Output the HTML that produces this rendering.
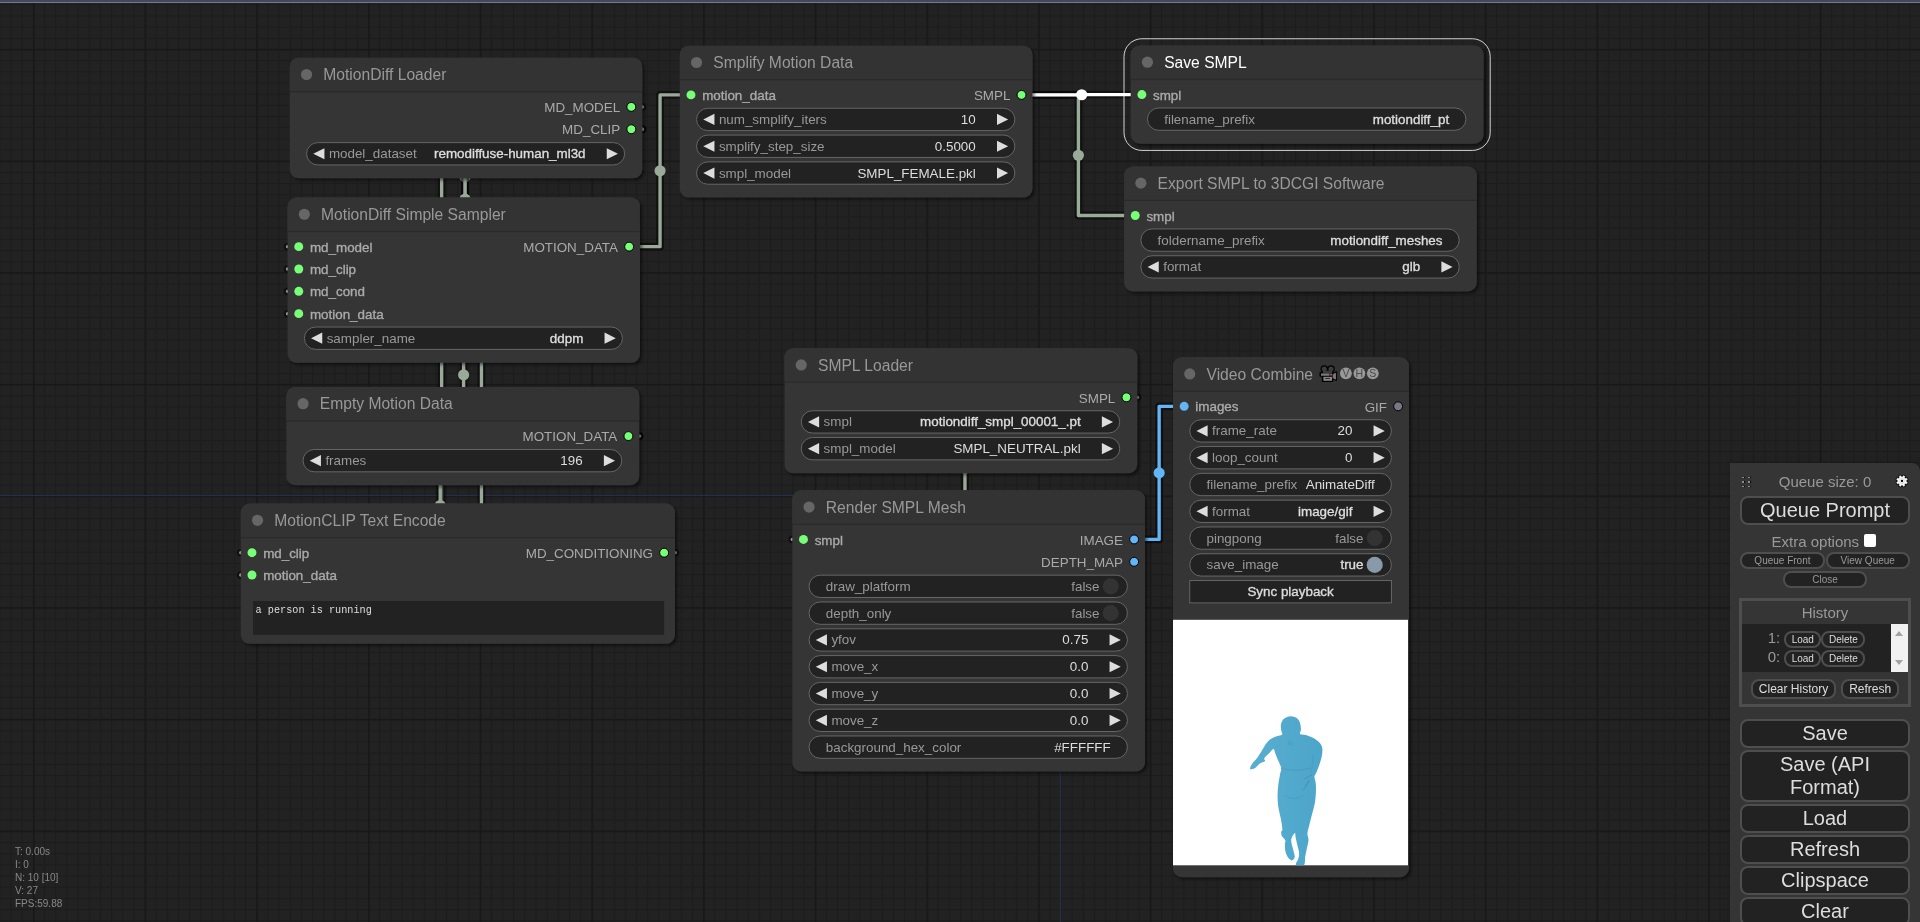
<!DOCTYPE html>
<html lang="en">
<head>
<meta charset="utf-8">
<title>ComfyUI</title>
<style>
html,body{margin:0;padding:0;width:1920px;height:922px;overflow:hidden;background:#202020;font-family:"Liberation Sans",Arial,sans-serif;}
#graph{position:absolute;left:0;top:0;width:1920px;height:922px;display:block;will-change:transform;}
#graph text{font-family:"Liberation Sans",Arial,sans-serif;}
#topbar{position:absolute;left:0;top:0;width:1920px;height:3px;background:#45475f;border-bottom:1px solid #74778f;box-sizing:border-box;z-index:5;}
.comfy-menu{font-size:15px;position:absolute;top:463px;left:1730px;text-align:center;display:flex;flex-direction:column;align-items:center;z-index:999;width:170px;color:#999;background-color:#353535;font-family:"Liberation Sans",Arial,sans-serif;padding:10px;border-radius:0 8px 8px 8px;box-shadow:3px 3px 8px rgba(0,0,0,0.4);line-height:17px;will-change:transform;}
.comfy-menu button{font-family:"Liberation Sans",Arial,sans-serif;font-size:20px;line-height:23px;box-sizing:border-box;display:block;color:#ddd;background-color:#222;border-radius:8px;border:2px solid #4e4e4e;margin:2px 0 0 0;padding:1px 6px;}
.comfy-menu>button{width:170px;}
.comfy-menu>*{flex-shrink:0;}
.hdr{position:relative;width:170px;height:21px;}
.hdr .qs{position:absolute;left:0;right:0;top:0;line-height:17px;}
.dh{position:absolute;left:0px;top:1.6px;width:12px;height:14px;}
.dh i{position:absolute;width:2px;height:1.4px;background:#8d8d8d;box-shadow:1px 0 1px #000;}
.xo{height:17px;padding-top:8.3px;line-height:17px;}
.cb{display:inline-block;width:12.4px;height:12.4px;background:#fff;border-radius:2px;vertical-align:0.6px;margin-left:5px;position:relative;left:0px}
.xo label{position:relative;left:-1px}
.comfy-menu-btns{position:relative;height:37.9px;margin-bottom:10px;width:170px;}
.comfy-menu .comfy-menu-btns button{position:absolute;margin:0;font-size:10px;line-height:10.5px;height:16.5px;width:84.3px;color:#999;padding:1.8px 2px 0 2px;}
.comfy-list{position:relative;width:166px;color:#999;background-color:#353535;margin-bottom:10px;border:3px solid #4e4e4e;}
.comfy-list h4{margin:0;padding:3px;font-weight:normal;font-size:15px;line-height:17px;}
.comfy-list-items{height:38px;background-color:#222;padding:5px 22px 5px 5px;position:relative;}
.comfy-list-items div.r{height:19px;line-height:17px;white-space:nowrap;display:flex;justify-content:center;align-items:flex-start;}
.comfy-list-items div.r span{margin-right:4px;}
.comfy-menu .comfy-list-items button{font-size:10px;line-height:10.5px;height:16.5px;margin-top:2.2px;padding:2.1px 5.5px 0 5.5px;}
.comfy-list-actions{margin:5px;display:flex;gap:5px;justify-content:center;}
.comfy-menu .comfy-list-actions button{font-size:12px;line-height:14px;height:20px;padding:1px 6px;}
.sb{position:absolute;right:0;top:0;width:17px;height:48px;background:#f1f1f1;}
.sb i{position:absolute;left:4px;width:0;height:0;border-left:4.5px solid transparent;border-right:4.5px solid transparent;}
.sb i.u{top:7px;border-bottom:5px solid #a3a3a3;}
.sb i.d{bottom:7px;border-top:5px solid #a3a3a3;}
</style>
</head>
<body>
<svg id="graph" width="1920" height="922" viewBox="0 0 1920 922">
<defs>
<pattern id="gs" x="-525.7" y="-397.83" width="11.17" height="11.17" patternUnits="userSpaceOnUse">
<rect width="11.17" height="11.17" fill="#222222"/>
<rect x="0" y="0" width="11.17" height="1.2" fill="#1c1c1c"/>
<rect x="0" y="0" width="1.2" height="11.17" fill="#1c1c1c"/>
</pattern>
<pattern id="gl" x="-525.25" y="-397.88" width="111.67" height="111.67" patternUnits="userSpaceOnUse">
<rect x="0" y="0" width="111.67" height="1.6" fill="#181818"/>
<rect x="0" y="0" width="1.6" height="111.67" fill="#181818"/>
</pattern>
<filter id="sh" x="-5%" y="-5%" width="110%" height="115%">
<feDropShadow dx="2.23" dy="2.23" stdDeviation="1.68" flood-color="#000000" flood-opacity="0.5"/>
</filter>
<linearGradient id="fig" x1="0" y1="0" x2="1" y2="0">
<stop offset="0" stop-color="#58aed0"/><stop offset="1" stop-color="#4ca5ca"/>
</linearGradient>
</defs>
<rect width="1920" height="922" fill="url(#gs)"/>
<rect width="1920" height="922" fill="url(#gl)"/>
<path d="M-5 495.6 H1060.4 V930" fill="none" stroke="#223355" stroke-width="1"/>
<g>
<path d="M631.33 106.88 L642.5 106.88 L465.05 106.88 L465.05 246.63 L287.6 246.63 L298.77 246.63" fill="none" stroke="rgba(0,0,0,0.5)" stroke-width="7.82" stroke-linejoin="round"/>
<path d="M631.33 106.88 L642.5 106.88 L465.05 106.88 L465.05 246.63 L287.6 246.63 L298.77 246.63" fill="none" stroke="#99AA99" stroke-width="3.35" stroke-linejoin="round"/>
<circle cx="465.05" cy="176.76" r="5.58" fill="#99AA99"/>
<path d="M631.33 129.22 L642.5 129.22 L465.05 129.22 L465.05 268.97 L287.6 268.97 L298.77 268.97" fill="none" stroke="rgba(0,0,0,0.5)" stroke-width="7.82" stroke-linejoin="round"/>
<path d="M631.33 129.22 L642.5 129.22 L465.05 129.22 L465.05 268.97 L287.6 268.97 L298.77 268.97" fill="none" stroke="#99AA99" stroke-width="3.35" stroke-linejoin="round"/>
<circle cx="465.05" cy="199.09" r="5.58" fill="#99AA99"/>
<path d="M631.33 129.22 L642.5 129.22 L441.65 129.22 L441.65 552.68 L240.8 552.68 L251.97 552.68" fill="none" stroke="rgba(0,0,0,0.5)" stroke-width="7.82" stroke-linejoin="round"/>
<path d="M631.33 129.22 L642.5 129.22 L441.65 129.22 L441.65 552.68 L240.8 552.68 L251.97 552.68" fill="none" stroke="#99AA99" stroke-width="3.35" stroke-linejoin="round"/>
<circle cx="441.65" cy="340.95" r="5.58" fill="#99AA99"/>
<path d="M664.13 552.68 L675.3 552.68 L481.45 552.68 L481.45 291.3 L287.6 291.3 L298.77 291.3" fill="none" stroke="rgba(0,0,0,0.5)" stroke-width="7.82" stroke-linejoin="round"/>
<path d="M664.13 552.68 L675.3 552.68 L481.45 552.68 L481.45 291.3 L287.6 291.3 L298.77 291.3" fill="none" stroke="#99AA99" stroke-width="3.35" stroke-linejoin="round"/>
<circle cx="481.45" cy="421.99" r="5.58" fill="#99AA99"/>
<path d="M628.43 436.08 L639.6 436.08 L463.6 436.08 L463.6 313.64 L287.6 313.64 L298.77 313.64" fill="none" stroke="rgba(0,0,0,0.5)" stroke-width="7.82" stroke-linejoin="round"/>
<path d="M628.43 436.08 L639.6 436.08 L463.6 436.08 L463.6 313.64 L287.6 313.64 L298.77 313.64" fill="none" stroke="#99AA99" stroke-width="3.35" stroke-linejoin="round"/>
<circle cx="463.6" cy="374.86" r="5.58" fill="#99AA99"/>
<path d="M628.43 436.08 L639.6 436.08 L440.2 436.08 L440.2 575.02 L240.8 575.02 L251.97 575.02" fill="none" stroke="rgba(0,0,0,0.5)" stroke-width="7.82" stroke-linejoin="round"/>
<path d="M628.43 436.08 L639.6 436.08 L440.2 436.08 L440.2 575.02 L240.8 575.02 L251.97 575.02" fill="none" stroke="#99AA99" stroke-width="3.35" stroke-linejoin="round"/>
<circle cx="440.2" cy="505.55" r="5.58" fill="#99AA99"/>
<path d="M629.13 246.63 L640.3 246.63 L660.05 246.63 L660.05 94.88 L679.8 94.88 L690.97 94.88" fill="none" stroke="rgba(0,0,0,0.5)" stroke-width="7.82" stroke-linejoin="round"/>
<path d="M629.13 246.63 L640.3 246.63 L660.05 246.63 L660.05 94.88 L679.8 94.88 L690.97 94.88" fill="none" stroke="#99AA99" stroke-width="3.35" stroke-linejoin="round"/>
<circle cx="660.05" cy="170.76" r="5.58" fill="#99AA99"/>
<path d="M1021.53 94.88 L1032.7 94.88 L1078.4 94.88 L1078.4 215.53 L1124.1 215.53 L1135.27 215.53" fill="none" stroke="rgba(0,0,0,0.5)" stroke-width="7.82" stroke-linejoin="round"/>
<path d="M1021.53 94.88 L1032.7 94.88 L1078.4 94.88 L1078.4 215.53 L1124.1 215.53 L1135.27 215.53" fill="none" stroke="#99AA99" stroke-width="3.35" stroke-linejoin="round"/>
<circle cx="1078.4" cy="155.21" r="5.58" fill="#99AA99"/>
<path d="M1126.43 397.33 L1137.6 397.33 L964.95 397.33 L964.95 539.43 L792.3 539.43 L803.47 539.43" fill="none" stroke="rgba(0,0,0,0.5)" stroke-width="7.82" stroke-linejoin="round"/>
<path d="M1126.43 397.33 L1137.6 397.33 L964.95 397.33 L964.95 539.43 L792.3 539.43 L803.47 539.43" fill="none" stroke="#99AA99" stroke-width="3.35" stroke-linejoin="round"/>
<circle cx="964.95" cy="468.38" r="5.58" fill="#99AA99"/>
<path d="M1134.13 539.43 L1145.3 539.43 L1159.15 539.43 L1159.15 406.33 L1173 406.33 L1184.17 406.33" fill="none" stroke="rgba(0,0,0,0.5)" stroke-width="7.82" stroke-linejoin="round"/>
<path d="M1134.13 539.43 L1145.3 539.43 L1159.15 539.43 L1159.15 406.33 L1173 406.33 L1184.17 406.33" fill="none" stroke="#64B5F6" stroke-width="3.35" stroke-linejoin="round"/>
<circle cx="1159.15" cy="472.88" r="5.58" fill="#64B5F6"/>
<path d="M1021.53 94.88 L1032.7 94.88 L1081.7 94.88 L1081.7 94.58 L1130.7 94.58 L1141.87 94.58" fill="none" stroke="rgba(0,0,0,0.5)" stroke-width="7.82" stroke-linejoin="round"/>
<path d="M1021.53 94.88 L1032.7 94.88 L1081.7 94.88 L1081.7 94.58 L1130.7 94.58 L1141.87 94.58" fill="none" stroke="#FFFFFF" stroke-width="3.35" stroke-linejoin="round"/>
<circle cx="1081.7" cy="94.73" r="5.58" fill="#FFFFFF"/>
</g>
<g>
<rect x="289.8" y="57.75" width="352.4" height="120.6" rx="8.93" fill="#353535" filter="url(#sh)"/>
<path d="M298.73 57.75 h334.53 a8.93 8.93 0 0 1 8.93 8.93 v24.57 h-352.4 v-24.57 a8.93 8.93 0 0 1 8.93 -8.93 z" fill="#333333"/>
<rect x="289.8" y="91.15" width="352.4" height="1.25" fill="rgba(0,0,0,0.2)"/>
<circle cx="306.55" cy="74.5" r="5.58" fill="#666666"/>
<text x="323.3" y="80.08" font-size="15.63" fill="#999999">MotionDiff Loader</text>
<circle cx="631.33" cy="106.88" r="4.47" fill="#77FF77" stroke="#000000" stroke-width="1"/>
<text x="620.17" y="112.07" font-size="13.4" fill="#AAAAAA" text-anchor="end">MD_MODEL</text>
<circle cx="631.33" cy="129.22" r="4.47" fill="#77FF77" stroke="#000000" stroke-width="1"/>
<text x="620.17" y="134.4" font-size="13.4" fill="#AAAAAA" text-anchor="end">MD_CLIP</text>
<rect x="306.55" y="142.62" width="318.1" height="22.33" rx="11.17" fill="#222222" stroke="#666666" stroke-width="1"/>
<path d="M324.42 148.2 L313.25 153.79 L324.42 159.37 Z" fill="#DDDDDD"/>
<path d="M606.78 148.2 L617.95 153.79 L606.78 159.37 Z" fill="#DDDDDD"/>
<text x="328.88" y="158.25" font-size="13.4" fill="#999999">model_dataset</text>
<text x="585.57" y="158.25" font-size="13.4" fill="#DDDDDD" text-anchor="end" stroke="#DDDDDD" stroke-width="0.35">remodiffuse-human_ml3d</text>
</g>
<g>
<rect x="287.6" y="197.5" width="352.4" height="165.27" rx="8.93" fill="#353535" filter="url(#sh)"/>
<path d="M296.53 197.5 h334.53 a8.93 8.93 0 0 1 8.93 8.93 v24.57 h-352.4 v-24.57 a8.93 8.93 0 0 1 8.93 -8.93 z" fill="#333333"/>
<rect x="287.6" y="230.9" width="352.4" height="1.25" fill="rgba(0,0,0,0.2)"/>
<circle cx="304.35" cy="214.25" r="5.58" fill="#666666"/>
<text x="321.1" y="219.83" font-size="15.63" fill="#999999">MotionDiff Simple Sampler</text>
<circle cx="298.77" cy="246.63" r="4.47" fill="#77FF77"/>
<text x="309.93" y="251.77" font-size="13.4" fill="#AAAAAA" stroke="#AAAAAA" stroke-width="0.35">md_model</text>
<circle cx="298.77" cy="268.97" r="4.47" fill="#77FF77"/>
<text x="309.93" y="274.1" font-size="13.4" fill="#AAAAAA" stroke="#AAAAAA" stroke-width="0.35">md_clip</text>
<circle cx="298.77" cy="291.3" r="4.47" fill="#77FF77"/>
<text x="309.93" y="296.44" font-size="13.4" fill="#AAAAAA" stroke="#AAAAAA" stroke-width="0.35">md_cond</text>
<circle cx="298.77" cy="313.64" r="4.47" fill="#77FF77"/>
<text x="309.93" y="318.77" font-size="13.4" fill="#AAAAAA" stroke="#AAAAAA" stroke-width="0.35">motion_data</text>
<circle cx="629.13" cy="246.63" r="4.47" fill="#77FF77" stroke="#000000" stroke-width="1"/>
<text x="617.97" y="251.82" font-size="13.4" fill="#AAAAAA" text-anchor="end">MOTION_DATA</text>
<rect x="304.35" y="327.04" width="318.1" height="22.33" rx="11.17" fill="#222222" stroke="#666666" stroke-width="1"/>
<path d="M322.22 332.62 L311.05 338.2 L322.22 343.79 Z" fill="#DDDDDD"/>
<path d="M604.58 332.62 L615.75 338.2 L604.58 343.79 Z" fill="#DDDDDD"/>
<text x="326.68" y="342.67" font-size="13.4" fill="#999999">sampler_name</text>
<text x="583.37" y="342.67" font-size="13.4" fill="#DDDDDD" text-anchor="end" stroke="#DDDDDD" stroke-width="0.35">ddpm</text>
</g>
<g>
<rect x="286.3" y="386.95" width="353" height="98.27" rx="8.93" fill="#353535" filter="url(#sh)"/>
<path d="M295.23 386.95 h335.13 a8.93 8.93 0 0 1 8.93 8.93 v24.57 h-353 v-24.57 a8.93 8.93 0 0 1 8.93 -8.93 z" fill="#333333"/>
<rect x="286.3" y="420.35" width="353" height="1.25" fill="rgba(0,0,0,0.2)"/>
<circle cx="303.05" cy="403.7" r="5.58" fill="#666666"/>
<text x="319.8" y="409.28" font-size="15.63" fill="#999999">Empty Motion Data</text>
<circle cx="628.43" cy="436.08" r="4.47" fill="#77FF77" stroke="#000000" stroke-width="1"/>
<text x="617.27" y="441.27" font-size="13.4" fill="#AAAAAA" text-anchor="end">MOTION_DATA</text>
<rect x="303.05" y="449.48" width="318.7" height="22.33" rx="11.17" fill="#222222" stroke="#666666" stroke-width="1"/>
<path d="M320.92 455.07 L309.75 460.65 L320.92 466.23 Z" fill="#DDDDDD"/>
<path d="M603.88 455.07 L615.05 460.65 L603.88 466.23 Z" fill="#DDDDDD"/>
<text x="325.38" y="465.12" font-size="13.4" fill="#999999">frames</text>
<text x="582.67" y="465.12" font-size="13.4" fill="#DDDDDD" text-anchor="end">196</text>
</g>
<g>
<rect x="240.8" y="503.55" width="434.2" height="140.25" rx="8.93" fill="#353535" filter="url(#sh)"/>
<path d="M249.73 503.55 h416.33 a8.93 8.93 0 0 1 8.93 8.93 v24.57 h-434.2 v-24.57 a8.93 8.93 0 0 1 8.93 -8.93 z" fill="#333333"/>
<rect x="240.8" y="536.95" width="434.2" height="1.25" fill="rgba(0,0,0,0.2)"/>
<circle cx="257.55" cy="520.3" r="5.58" fill="#666666"/>
<text x="274.3" y="525.88" font-size="15.63" fill="#999999">MotionCLIP Text Encode</text>
<circle cx="251.97" cy="552.68" r="4.47" fill="#77FF77"/>
<text x="263.13" y="557.82" font-size="13.4" fill="#AAAAAA" stroke="#AAAAAA" stroke-width="0.35">md_clip</text>
<circle cx="251.97" cy="575.02" r="4.47" fill="#77FF77"/>
<text x="263.13" y="580.15" font-size="13.4" fill="#AAAAAA" stroke="#AAAAAA" stroke-width="0.35">motion_data</text>
<circle cx="664.13" cy="552.68" r="4.47" fill="#77FF77" stroke="#000000" stroke-width="1"/>
<text x="652.97" y="557.87" font-size="13.4" fill="#AAAAAA" text-anchor="end">MD_CONDITIONING</text>
<rect x="253.1" y="601" width="411" height="33.8" fill="#222222"/>
<text x="255.6" y="612.7" style="font-family:'Liberation Mono', 'DejaVu Sans Mono', monospace" font-size="10.2" fill="#DDDDDD">a person is running</text>
</g>
<g>
<rect x="679.8" y="45.75" width="352.6" height="151.87" rx="8.93" fill="#353535" filter="url(#sh)"/>
<path d="M688.73 45.75 h334.73 a8.93 8.93 0 0 1 8.93 8.93 v24.57 h-352.6 v-24.57 a8.93 8.93 0 0 1 8.93 -8.93 z" fill="#333333"/>
<rect x="679.8" y="79.15" width="352.6" height="1.25" fill="rgba(0,0,0,0.2)"/>
<circle cx="696.55" cy="62.5" r="5.58" fill="#666666"/>
<text x="713.3" y="68.08" font-size="15.63" fill="#999999">Smplify Motion Data</text>
<circle cx="690.97" cy="94.88" r="4.47" fill="#77FF77"/>
<text x="702.13" y="100.02" font-size="13.4" fill="#AAAAAA" stroke="#AAAAAA" stroke-width="0.35">motion_data</text>
<circle cx="1021.53" cy="94.88" r="4.47" fill="#77FF77" stroke="#000000" stroke-width="1"/>
<text x="1010.37" y="100.07" font-size="13.4" fill="#AAAAAA" text-anchor="end">SMPL</text>
<rect x="696.55" y="108.28" width="318.3" height="22.33" rx="11.17" fill="#222222" stroke="#666666" stroke-width="1"/>
<path d="M714.42 113.87 L703.25 119.45 L714.42 125.03 Z" fill="#DDDDDD"/>
<path d="M996.98 113.87 L1008.15 119.45 L996.98 125.03 Z" fill="#DDDDDD"/>
<text x="718.88" y="123.92" font-size="13.4" fill="#999999">num_smplify_iters</text>
<text x="975.77" y="123.92" font-size="13.4" fill="#DDDDDD" text-anchor="end">10</text>
<rect x="696.55" y="135.09" width="318.3" height="22.33" rx="11.17" fill="#222222" stroke="#666666" stroke-width="1"/>
<path d="M714.42 140.67 L703.25 146.25 L714.42 151.84 Z" fill="#DDDDDD"/>
<path d="M996.98 140.67 L1008.15 146.25 L996.98 151.84 Z" fill="#DDDDDD"/>
<text x="718.88" y="150.72" font-size="13.4" fill="#999999">smplify_step_size</text>
<text x="975.77" y="150.72" font-size="13.4" fill="#DDDDDD" text-anchor="end">0.5000</text>
<rect x="696.55" y="161.89" width="318.3" height="22.33" rx="11.17" fill="#222222" stroke="#666666" stroke-width="1"/>
<path d="M714.42 167.47 L703.25 173.05 L714.42 178.64 Z" fill="#DDDDDD"/>
<path d="M996.98 167.47 L1008.15 173.05 L996.98 178.64 Z" fill="#DDDDDD"/>
<text x="718.88" y="177.52" font-size="13.4" fill="#999999">smpl_model</text>
<text x="975.77" y="177.52" font-size="13.4" fill="#DDDDDD" text-anchor="end">SMPL_FEMALE.pkl</text>
</g>
<g>
<rect x="1124.1" y="166.4" width="352.7" height="125.07" rx="8.93" fill="#353535" filter="url(#sh)"/>
<path d="M1133.03 166.4 h334.83 a8.93 8.93 0 0 1 8.93 8.93 v24.57 h-352.7 v-24.57 a8.93 8.93 0 0 1 8.93 -8.93 z" fill="#333333"/>
<rect x="1124.1" y="199.8" width="352.7" height="1.25" fill="rgba(0,0,0,0.2)"/>
<circle cx="1140.85" cy="183.15" r="5.58" fill="#666666"/>
<text x="1157.6" y="188.73" font-size="15.63" fill="#999999">Export SMPL to 3DCGI Software</text>
<circle cx="1135.27" cy="215.53" r="4.47" fill="#77FF77"/>
<text x="1146.43" y="220.67" font-size="13.4" fill="#AAAAAA" stroke="#AAAAAA" stroke-width="0.35">smpl</text>
<rect x="1140.85" y="228.93" width="318.4" height="22.33" rx="11.17" fill="#222222" stroke="#666666" stroke-width="1"/>
<text x="1157.6" y="244.57" font-size="13.4" fill="#999999">foldername_prefix</text>
<text x="1442.5" y="244.57" font-size="13.4" fill="#DDDDDD" text-anchor="end" stroke="#DDDDDD" stroke-width="0.35">motiondiff_meshes</text>
<rect x="1140.85" y="255.74" width="318.4" height="22.33" rx="11.17" fill="#222222" stroke="#666666" stroke-width="1"/>
<path d="M1158.72 261.32 L1147.55 266.9 L1158.72 272.49 Z" fill="#DDDDDD"/>
<path d="M1441.38 261.32 L1452.55 266.9 L1441.38 272.49 Z" fill="#DDDDDD"/>
<text x="1163.18" y="271.37" font-size="13.4" fill="#999999">format</text>
<text x="1420.16" y="271.37" font-size="13.4" fill="#DDDDDD" text-anchor="end" stroke="#DDDDDD" stroke-width="0.35">glb</text>
</g>
<g>
<rect x="784.5" y="348.2" width="352.8" height="125.07" rx="8.93" fill="#353535" filter="url(#sh)"/>
<path d="M793.43 348.2 h334.93 a8.93 8.93 0 0 1 8.93 8.93 v24.57 h-352.8 v-24.57 a8.93 8.93 0 0 1 8.93 -8.93 z" fill="#333333"/>
<rect x="784.5" y="381.6" width="352.8" height="1.25" fill="rgba(0,0,0,0.2)"/>
<circle cx="801.25" cy="364.95" r="5.58" fill="#666666"/>
<text x="818" y="370.53" font-size="15.63" fill="#999999">SMPL Loader</text>
<circle cx="1126.43" cy="397.33" r="4.47" fill="#77FF77" stroke="#000000" stroke-width="1"/>
<text x="1115.27" y="402.52" font-size="13.4" fill="#AAAAAA" text-anchor="end">SMPL</text>
<rect x="801.25" y="410.73" width="318.5" height="22.33" rx="11.17" fill="#222222" stroke="#666666" stroke-width="1"/>
<path d="M819.12 416.32 L807.95 421.9 L819.12 427.48 Z" fill="#DDDDDD"/>
<path d="M1101.88 416.32 L1113.05 421.9 L1101.88 427.48 Z" fill="#DDDDDD"/>
<text x="823.58" y="426.37" font-size="13.4" fill="#999999">smpl</text>
<text x="1080.66" y="426.37" font-size="13.4" fill="#DDDDDD" text-anchor="end" stroke="#DDDDDD" stroke-width="0.35">motiondiff_smpl_00001_.pt</text>
<rect x="801.25" y="437.53" width="318.5" height="22.33" rx="11.17" fill="#222222" stroke="#666666" stroke-width="1"/>
<path d="M819.12 443.12 L807.95 448.7 L819.12 454.29 Z" fill="#DDDDDD"/>
<path d="M1101.88 443.12 L1113.05 448.7 L1101.88 454.29 Z" fill="#DDDDDD"/>
<text x="823.58" y="453.17" font-size="13.4" fill="#999999">smpl_model</text>
<text x="1080.66" y="453.17" font-size="13.4" fill="#DDDDDD" text-anchor="end">SMPL_NEUTRAL.pkl</text>
</g>
<g>
<rect x="792.3" y="490.3" width="352.7" height="281.1" rx="8.93" fill="#353535" filter="url(#sh)"/>
<path d="M801.23 490.3 h334.83 a8.93 8.93 0 0 1 8.93 8.93 v24.57 h-352.7 v-24.57 a8.93 8.93 0 0 1 8.93 -8.93 z" fill="#333333"/>
<rect x="792.3" y="523.7" width="352.7" height="1.25" fill="rgba(0,0,0,0.2)"/>
<circle cx="809.05" cy="507.05" r="5.58" fill="#666666"/>
<text x="825.8" y="512.63" font-size="15.63" fill="#999999">Render SMPL Mesh</text>
<circle cx="803.47" cy="539.43" r="4.47" fill="#77FF77"/>
<text x="814.63" y="544.57" font-size="13.4" fill="#AAAAAA" stroke="#AAAAAA" stroke-width="0.35">smpl</text>
<circle cx="1134.13" cy="539.43" r="4.47" fill="#64B5F6" stroke="#000000" stroke-width="1"/>
<text x="1122.97" y="544.62" font-size="13.4" fill="#AAAAAA" text-anchor="end">IMAGE</text>
<circle cx="1134.13" cy="561.77" r="4.47" fill="#64B5F6" stroke="#000000" stroke-width="1"/>
<text x="1122.97" y="566.95" font-size="13.4" fill="#AAAAAA" text-anchor="end">DEPTH_MAP</text>
<rect x="809.05" y="575.17" width="318.4" height="22.33" rx="11.17" fill="#222222" stroke="#666666" stroke-width="1"/>
<circle cx="1110.7" cy="586.34" r="8.04" fill="#333333"/>
<text x="825.8" y="590.8" font-size="13.4" fill="#999999">draw_platform</text>
<text x="1099.53" y="590.8" font-size="13.4" fill="#999999" text-anchor="end">false</text>
<rect x="809.05" y="601.97" width="318.4" height="22.33" rx="11.17" fill="#222222" stroke="#666666" stroke-width="1"/>
<circle cx="1110.7" cy="613.14" r="8.04" fill="#333333"/>
<text x="825.8" y="617.6" font-size="13.4" fill="#999999">depth_only</text>
<text x="1099.53" y="617.6" font-size="13.4" fill="#999999" text-anchor="end">false</text>
<rect x="809.05" y="628.77" width="318.4" height="22.33" rx="11.17" fill="#222222" stroke="#666666" stroke-width="1"/>
<path d="M826.92 634.35 L815.75 639.94 L826.92 645.52 Z" fill="#DDDDDD"/>
<path d="M1109.58 634.35 L1120.75 639.94 L1109.58 645.52 Z" fill="#DDDDDD"/>
<text x="831.38" y="644.4" font-size="13.4" fill="#999999">yfov</text>
<text x="1088.37" y="644.4" font-size="13.4" fill="#DDDDDD" text-anchor="end">0.75</text>
<rect x="809.05" y="655.57" width="318.4" height="22.33" rx="11.17" fill="#222222" stroke="#666666" stroke-width="1"/>
<path d="M826.92 661.15 L815.75 666.74 L826.92 672.32 Z" fill="#DDDDDD"/>
<path d="M1109.58 661.15 L1120.75 666.74 L1109.58 672.32 Z" fill="#DDDDDD"/>
<text x="831.38" y="671.2" font-size="13.4" fill="#999999">move_x</text>
<text x="1088.37" y="671.2" font-size="13.4" fill="#DDDDDD" text-anchor="end">0.0</text>
<rect x="809.05" y="682.37" width="318.4" height="22.33" rx="11.17" fill="#222222" stroke="#666666" stroke-width="1"/>
<path d="M826.92 687.95 L815.75 693.54 L826.92 699.12 Z" fill="#DDDDDD"/>
<path d="M1109.58 687.95 L1120.75 693.54 L1109.58 699.12 Z" fill="#DDDDDD"/>
<text x="831.38" y="698.01" font-size="13.4" fill="#999999">move_y</text>
<text x="1088.37" y="698.01" font-size="13.4" fill="#DDDDDD" text-anchor="end">0.0</text>
<rect x="809.05" y="709.17" width="318.4" height="22.33" rx="11.17" fill="#222222" stroke="#666666" stroke-width="1"/>
<path d="M826.92 714.76 L815.75 720.34 L826.92 725.92 Z" fill="#DDDDDD"/>
<path d="M1109.58 714.76 L1120.75 720.34 L1109.58 725.92 Z" fill="#DDDDDD"/>
<text x="831.38" y="724.81" font-size="13.4" fill="#999999">move_z</text>
<text x="1088.37" y="724.81" font-size="13.4" fill="#DDDDDD" text-anchor="end">0.0</text>
<rect x="809.05" y="735.97" width="318.4" height="22.33" rx="11.17" fill="#222222" stroke="#666666" stroke-width="1"/>
<text x="825.8" y="751.61" font-size="13.4" fill="#999999">background_hex_color</text>
<text x="1110.7" y="751.61" font-size="13.4" fill="#DDDDDD" text-anchor="end">#FFFFFF</text>
</g>
<g>
<rect x="1173" y="357.2" width="236" height="520" rx="8.93" fill="#353535" filter="url(#sh)"/>
<path d="M1181.93 357.2 h218.13 a8.93 8.93 0 0 1 8.93 8.93 v24.57 h-236 v-24.57 a8.93 8.93 0 0 1 8.93 -8.93 z" fill="#333333"/>
<rect x="1173" y="390.6" width="236" height="1.25" fill="rgba(0,0,0,0.2)"/>
<circle cx="1189.75" cy="373.95" r="5.58" fill="#666666"/>
<text x="1206.5" y="379.53" font-size="15.63" fill="#999999">Video Combine</text>
<circle cx="1184.17" cy="406.33" r="4.47" fill="#64B5F6"/>
<text x="1195.33" y="411.47" font-size="13.4" fill="#AAAAAA" stroke="#AAAAAA" stroke-width="0.35">images</text>
<circle cx="1398.13" cy="406.33" r="4.47" fill="#777788" stroke="#000000" stroke-width="1"/>
<text x="1386.97" y="411.52" font-size="13.4" fill="#AAAAAA" text-anchor="end">GIF</text>
<rect x="1189.75" y="419.73" width="201.7" height="22.33" rx="11.17" fill="#222222" stroke="#666666" stroke-width="1"/>
<path d="M1207.62 425.32 L1196.45 430.9 L1207.62 436.48 Z" fill="#DDDDDD"/>
<path d="M1373.58 425.32 L1384.75 430.9 L1373.58 436.48 Z" fill="#DDDDDD"/>
<text x="1212.08" y="435.37" font-size="13.4" fill="#999999">frame_rate</text>
<text x="1352.37" y="435.37" font-size="13.4" fill="#DDDDDD" text-anchor="end">20</text>
<rect x="1189.75" y="446.53" width="201.7" height="22.33" rx="11.17" fill="#222222" stroke="#666666" stroke-width="1"/>
<path d="M1207.62 452.12 L1196.45 457.7 L1207.62 463.29 Z" fill="#DDDDDD"/>
<path d="M1373.58 452.12 L1384.75 457.7 L1373.58 463.29 Z" fill="#DDDDDD"/>
<text x="1212.08" y="462.17" font-size="13.4" fill="#999999">loop_count</text>
<text x="1352.37" y="462.17" font-size="13.4" fill="#DDDDDD" text-anchor="end">0</text>
<rect x="1189.75" y="473.34" width="201.7" height="22.33" rx="11.17" fill="#222222" stroke="#666666" stroke-width="1"/>
<text x="1206.5" y="488.97" font-size="13.4" fill="#999999">filename_prefix</text>
<text x="1374.7" y="488.97" font-size="13.4" fill="#DDDDDD" text-anchor="end">AnimateDiff</text>
<rect x="1189.75" y="500.14" width="201.7" height="22.33" rx="11.17" fill="#222222" stroke="#666666" stroke-width="1"/>
<path d="M1207.62 505.72 L1196.45 511.3 L1207.62 516.89 Z" fill="#DDDDDD"/>
<path d="M1373.58 505.72 L1384.75 511.3 L1373.58 516.89 Z" fill="#DDDDDD"/>
<text x="1212.08" y="515.77" font-size="13.4" fill="#999999">format</text>
<text x="1352.37" y="515.77" font-size="13.4" fill="#DDDDDD" text-anchor="end" stroke="#DDDDDD" stroke-width="0.35">image/gif</text>
<rect x="1189.75" y="526.94" width="201.7" height="22.33" rx="11.17" fill="#222222" stroke="#666666" stroke-width="1"/>
<circle cx="1374.7" cy="538.1" r="8.04" fill="#333333"/>
<text x="1206.5" y="542.57" font-size="13.4" fill="#999999">pingpong</text>
<text x="1363.53" y="542.57" font-size="13.4" fill="#999999" text-anchor="end">false</text>
<rect x="1189.75" y="553.74" width="201.7" height="22.33" rx="11.17" fill="#222222" stroke="#666666" stroke-width="1"/>
<circle cx="1374.7" cy="564.91" r="8.04" fill="#8899AA"/>
<text x="1206.5" y="569.37" font-size="13.4" fill="#999999">save_image</text>
<text x="1363.53" y="569.37" font-size="13.4" fill="#DDDDDD" text-anchor="end" stroke="#DDDDDD" stroke-width="0.35">true</text>
<rect x="1189.75" y="580.54" width="201.7" height="22.33" fill="#222222" stroke="#666666" stroke-width="1"/>
<text x="1290.6" y="596.17" font-size="13.4" fill="#DDDDDD" text-anchor="middle" stroke="#DDDDDD" stroke-width="0.35">Sync playback</text>
<rect x="1173" y="619.8" width="235" height="245.5" fill="#FFFFFF"/>
<clipPath id="pv"><rect x="1173" y="619.8" width="235" height="245.5"/></clipPath>
<path d="M1290.83 716.22 C1292.06 716.22 1293.35 716.5 1294.52 716.96 C1295.68 717.42 1296.91 717.97 1297.83 718.99 C1298.76 720 1299.52 721.29 1300.05 723.04 C1300.57 724.79 1300.97 727.65 1300.97 729.49 C1300.97 731.34 1299.28 733.18 1300.05 734.1 C1300.81 735.02 1303.43 734.41 1305.58 735.02 C1307.73 735.64 1310.65 736.56 1312.95 737.79 C1315.25 739.02 1317.86 740.77 1319.4 742.4 C1320.94 744.02 1321.74 745.41 1322.17 747.56 C1322.6 749.71 1322.38 752.63 1321.98 755.3 C1321.58 757.97 1320.66 760.83 1319.77 763.59 C1318.88 766.36 1317.53 769.74 1316.64 771.89 C1315.75 774.04 1314.58 774.65 1314.42 776.5 C1314.27 778.34 1315.47 780.34 1315.71 782.95 C1315.96 785.56 1316.05 788.79 1315.9 792.17 C1315.75 795.55 1315.44 799.54 1314.79 803.23 C1314.15 806.91 1312.95 810.6 1312.03 814.29 C1311.11 817.97 1310.03 822.12 1309.26 825.35 C1308.49 828.57 1307.54 831.18 1307.42 833.64 C1307.3 836.1 1308.65 837.48 1308.53 840.09 C1308.4 842.7 1307.24 846.54 1306.68 849.31 C1306.13 852.07 1305.67 854.07 1305.21 856.68 C1304.75 859.29 1305.45 863.59 1303.92 864.98 C1302.38 866.36 1296.91 866.05 1295.99 864.98 C1295.07 863.9 1297.86 860.52 1298.39 858.53 C1298.91 856.53 1299.28 855.15 1299.12 853 C1298.97 850.84 1298.05 848.23 1297.47 845.62 C1296.88 843.01 1296.05 839.42 1295.62 837.33 C1295.19 835.24 1295.62 832.63 1294.88 833.09 C1294.15 833.55 1291.41 837.08 1291.2 840.09 C1290.98 843.1 1293.01 848.33 1293.59 851.15 C1294.18 853.98 1294.95 855.51 1294.7 857.05 C1294.45 858.59 1293.2 860.25 1292.12 860.37 C1291.04 860.49 1289.35 859.26 1288.25 857.79 C1287.14 856.31 1286.04 853.79 1285.48 851.52 C1284.93 849.25 1284.96 845.99 1284.93 844.15 C1284.9 842.3 1285.82 841.84 1285.3 840.46 C1284.78 839.08 1282.47 837.27 1281.8 835.85 C1281.12 834.44 1281.15 833.12 1281.24 831.98 C1281.34 830.84 1282.44 831.37 1282.35 829.03 C1282.26 826.7 1281.37 821.66 1280.69 817.97 C1280.02 814.29 1278.82 810.6 1278.29 806.91 C1277.77 803.23 1277.56 799.54 1277.56 795.85 C1277.56 792.17 1277.86 788.48 1278.29 784.79 C1278.73 781.11 1279.65 776.5 1280.14 773.73 C1280.63 770.97 1281.55 770.35 1281.24 768.2 C1280.94 766.05 1279.28 763.29 1278.29 760.83 C1277.31 758.37 1276.14 755.42 1275.35 753.46 C1274.55 751.49 1274.45 749.16 1273.5 749.03 C1272.55 748.91 1271.17 751.18 1269.63 752.72 C1268.1 754.25 1265.05 756.87 1264.29 758.25 C1263.52 759.63 1265.82 760.09 1265.02 761.01 C1264.22 761.94 1261.03 762.7 1259.49 763.78 C1257.96 764.85 1257.16 766.54 1255.81 767.47 C1254.45 768.39 1252.33 769.22 1251.38 769.31 C1250.43 769.4 1249.85 769.09 1250.09 768.02 C1250.34 766.94 1251.6 764.67 1252.86 762.86 C1254.12 761.04 1256.24 759.02 1257.65 757.14 C1259.06 755.27 1260.11 753.58 1261.34 751.61 C1262.57 749.65 1263.64 747.31 1265.02 745.35 C1266.41 743.38 1267.94 741.23 1269.63 739.82 C1271.32 738.4 1273.23 737.67 1275.16 736.87 C1277.1 736.07 1280.05 735.51 1281.24 735.02 C1282.44 734.53 1282.38 734.84 1282.35 733.92 C1282.32 733 1281.27 731.15 1281.06 729.49 C1280.84 727.83 1280.66 725.65 1281.06 723.96 C1281.46 722.27 1282.44 720.52 1283.46 719.35 C1284.47 718.19 1285.91 717.48 1287.14 716.96 C1288.37 716.44 1289.6 716.22 1290.83 716.22Z" fill="url(#fig)" clip-path="url(#pv)"/>
<path d="M1281.24 768.57 Q1296.36 772.26 1312.03 767.83" fill="none" stroke="#4597bd" stroke-width="0.7" stroke-linecap="round"/>
<path d="M1304.47 778.89 L1312.21 774.47" fill="none" stroke="#3a87ab" stroke-width="0.6" stroke-linecap="round"/>
<path d="M1303.36 789.95 L1309.63 780.37" fill="none" stroke="#3a87ab" stroke-width="0.6" stroke-linecap="round"/>
<path d="M1305.21 786.64 L1308.16 781.11" fill="none" stroke="#3f8fb3" stroke-width="0.5" stroke-linecap="round"/>
<path d="M1288.62 741.29 L1289.35 744.98" fill="none" stroke="#3f8fb3" stroke-width="0.5" stroke-linecap="round"/>
<path d="M1291.01 741.29 L1291.57 744.98" fill="none" stroke="#3f8fb3" stroke-width="0.5" stroke-linecap="round"/>
<path d="M1313.32 754.38 Q1313.32 764.52 1311.11 772.26" fill="none" stroke="#4597bd" stroke-width="0.6" stroke-linecap="round"/>
<path d="M1285.3 795.85 Q1293.59 801.75 1302.81 795.85" fill="none" stroke="#4597bd" stroke-width="0.6" stroke-linecap="round"/>
</g>
<g>
<rect x="1130.7" y="45.45" width="352.8" height="98.27" rx="8.93" fill="#353535" filter="url(#sh)"/>
<path d="M1139.63 45.45 h334.93 a8.93 8.93 0 0 1 8.93 8.93 v24.57 h-352.8 v-24.57 a8.93 8.93 0 0 1 8.93 -8.93 z" fill="#333333"/>
<rect x="1130.7" y="78.85" width="352.8" height="1.25" fill="rgba(0,0,0,0.2)"/>
<circle cx="1147.45" cy="62.2" r="5.58" fill="#666666"/>
<text x="1164.2" y="67.78" font-size="15.63" fill="#FFFFFF">Save SMPL</text>
<rect x="1124" y="38.75" width="366.2" height="111.67" rx="17.87" fill="none" stroke="#FFFFFF" stroke-opacity="0.8" stroke-width="1"/>
<circle cx="1141.87" cy="94.58" r="4.47" fill="#77FF77"/>
<text x="1153.03" y="99.72" font-size="13.4" fill="#AAAAAA" stroke="#AAAAAA" stroke-width="0.35">smpl</text>
<rect x="1147.45" y="107.98" width="318.5" height="22.33" rx="11.17" fill="#222222" stroke="#666666" stroke-width="1"/>
<text x="1164.2" y="123.62" font-size="13.4" fill="#999999">filename_prefix</text>
<text x="1449.2" y="123.62" font-size="13.4" fill="#DDDDDD" text-anchor="end" stroke="#DDDDDD" stroke-width="0.35">motiondiff_pt</text>
</g>
<g>
<g fill="#000000">
<circle cx="1324.3" cy="369" r="3.75"/><circle cx="1331" cy="369" r="3.75"/>
<rect x="1319.5" y="372" width="13.6" height="4.8" rx="0.8"/>
<rect x="1321.9" y="375.5" width="11.4" height="6.6" rx="0.9"/>
<path d="M1331.500 373.400 L1336.900 370.900 V381.200 L1331.500 378.800 Z"/>
</g>
<circle cx="1324.3" cy="369" r="2.55" fill="#3b3b3b"/><circle cx="1331" cy="369" r="2.55" fill="#3b3b3b"/>
<rect x="1323" y="370.600" width="9" height="2.8" fill="#3b3b3b"/>
<rect x="1321" y="373.500" width="11.200" height="2.200" fill="#4a4a4a"/>
<rect x="1321" y="373.600" width="7.900" height="2" fill="#7a7a7a"/>
<rect x="1330.100" y="373.800" width="1.800" height="1.400" fill="#c8432f"/>
<rect x="1323.400" y="376.800" width="8.600" height="4" fill="#868686"/>
<rect x="1325.300" y="378" width="4.500" height="0.900" fill="#1e1e1e"/>
<path d="M1332.600 374.300 L1335.800 372.700 V379.600 L1332.600 378.200 Z" fill="#6e6e6e"/>
<rect x="1334.700" y="373.400" width="0.800" height="5.800" fill="#8c8c8c"/>
</g>
<circle cx="1345.9" cy="373.3" r="5.9" fill="#999999"/>
<text x="1345.9" y="377.2" font-size="10.5" fill="#4a4a4a" text-anchor="middle">V</text>
<circle cx="1359.4" cy="373.3" r="5.9" fill="#999999"/>
<text x="1359.4" y="377.2" font-size="10.5" fill="#4a4a4a" text-anchor="middle">H</text>
<circle cx="1372.8" cy="373.3" r="5.9" fill="#999999"/>
<text x="1372.8" y="377.2" font-size="10.5" fill="#4a4a4a" text-anchor="middle">S</text>
<text x="15" y="855.4" font-size="10" fill="#888888">T: 0.00s</text>
<text x="15" y="868.4" font-size="10" fill="#888888">I: 0</text>
<text x="15" y="881.4" font-size="10" fill="#888888">N: 10 [10]</text>
<text x="15" y="894.4" font-size="10" fill="#888888">V: 27</text>
<text x="15" y="907.4" font-size="10" fill="#888888">FPS:59.88</text>
</svg>
<div id="topbar"></div>
<div class="comfy-menu">
<div class="hdr"><span class="dh"><i style="left:2px;top:2px"></i><i style="left:7.6px;top:2px"></i><i style="left:2px;top:6.6px"></i><i style="left:7.6px;top:6.6px"></i><i style="left:2px;top:11.2px"></i><i style="left:7.6px;top:11.2px"></i></span><span class="qs">Queue size: 0</span>
<svg style="position:absolute;left:153.96px;top:0.35px" width="16" height="16" viewBox="-8 -8 16 16"><path d="M0.55 -4.06 L1.33 -5.34 L2.84 -4.71 L2.49 -3.26 L3.26 -2.49 L4.71 -2.84 L5.34 -1.33 L4.06 -0.55 L4.06 0.55 L5.34 1.33 L4.71 2.84 L3.26 2.49 L2.49 3.26 L2.84 4.71 L1.33 5.34 L0.55 4.06 L-0.55 4.06 L-1.33 5.34 L-2.84 4.71 L-2.49 3.26 L-3.26 2.49 L-4.71 2.84 L-5.34 1.33 L-4.06 0.55 L-4.06 -0.55 L-5.34 -1.33 L-4.71 -2.84 L-3.26 -2.49 L-2.49 -3.26 L-2.84 -4.71 L-1.33 -5.34 L-0.55 -4.06Z" fill="#000000" stroke="#000000" stroke-width="2" stroke-linejoin="round"/><path d="M0.55 -4.06 L1.33 -5.34 L2.84 -4.71 L2.49 -3.26 L3.26 -2.49 L4.71 -2.84 L5.34 -1.33 L4.06 -0.55 L4.06 0.55 L5.34 1.33 L4.71 2.84 L3.26 2.49 L2.49 3.26 L2.84 4.71 L1.33 5.34 L0.55 4.06 L-0.55 4.06 L-1.33 5.34 L-2.84 4.71 L-2.49 3.26 L-3.26 2.49 L-4.71 2.84 L-5.34 1.33 L-4.06 0.55 L-4.06 -0.55 L-5.34 -1.33 L-4.71 -2.84 L-3.26 -2.49 L-2.49 -3.26 L-2.84 -4.71 L-1.33 -5.34 L-0.55 -4.06Z" fill="#f4f4f4" stroke="#f4f4f4" stroke-width="0.5" stroke-linejoin="round"/><circle r="2.5" fill="none" stroke="#cfcfcf" stroke-width="0.6"/><circle r="1.15" fill="#000000"/></svg></div>
<button class="comfy-queue-btn" style="width:170px">Queue Prompt</button>
<div class="xo"><label>Extra options<span class="cb"></span></label></div>
<div class="comfy-menu-btns"><button style="left:0.3px;top:2px">Queue Front</button><button style="left:85.6px;top:2px">View Queue</button><button style="left:43px;top:21.1px">Close</button></div>
<div class="comfy-list"><h4>History</h4>
<div class="comfy-list-items"><div class="r"><span>1:</span><button>Load</button><button>Delete</button></div><div class="r"><span>0:</span><button>Load</button><button>Delete</button></div><div class="sb"><i class="u"></i><i class="d"></i></div></div>
<div class="comfy-list-actions"><button>Clear History</button><button>Refresh</button></div></div>
<button>Save</button>
<button>Save (API Format)</button>
<button>Load</button>
<button>Refresh</button>
<button>Clipspace</button>
<button>Clear</button>
<button>Load Default</button>
</div>
</body>
</html>
